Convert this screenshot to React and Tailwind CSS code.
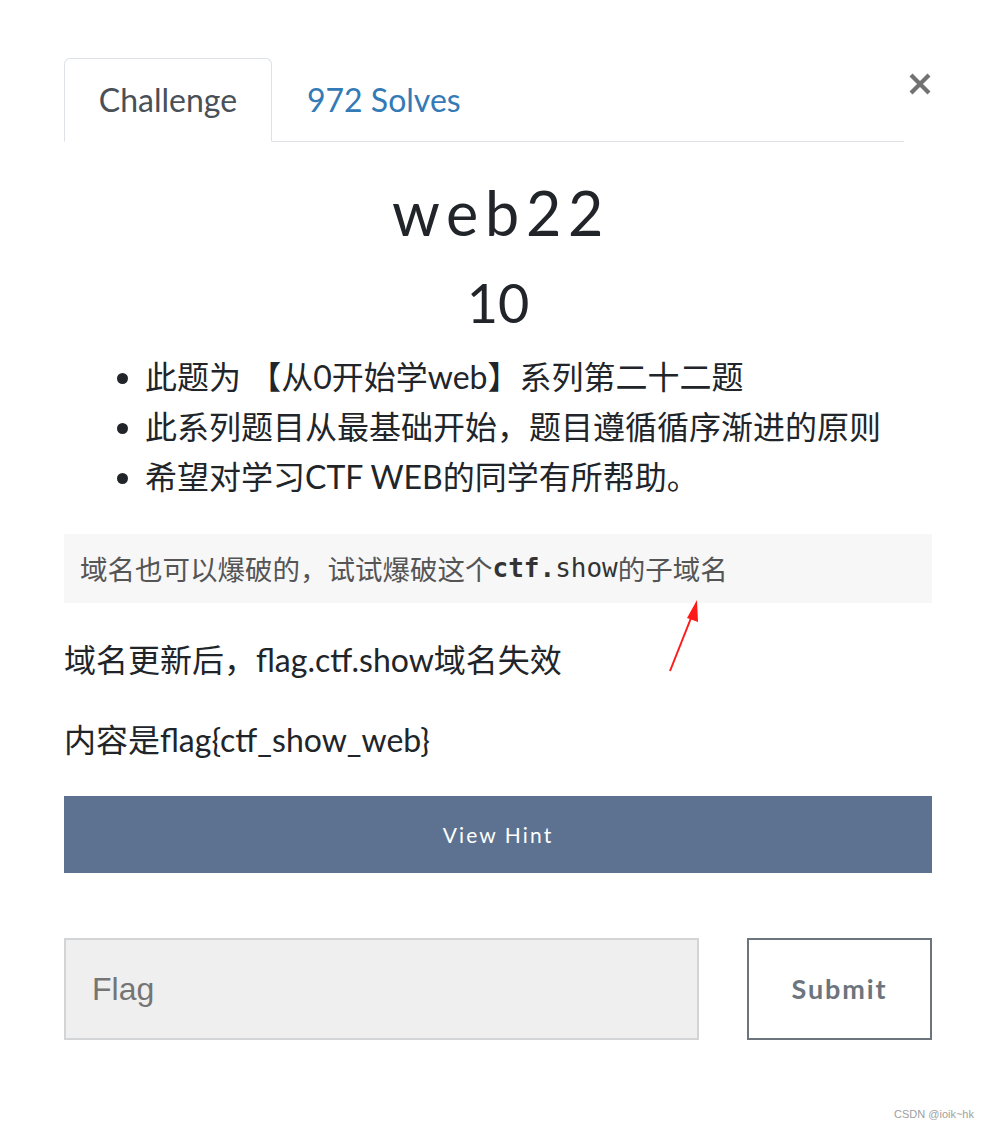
import React from 'react';

const cjk = "font-['Lato','Noto_Sans_CJK_SC',sans-serif]";

const App = () => {
  return (
    <div className={`relative w-[989px] h-[1129px] bg-white text-[#212529] ${cjk}`}>
      <div className="pt-[58px] pl-[64px] pr-[57px]">
        {/* tabs header */}
        <div className="flex items-start">
          <div className="flex flex-1 h-[84px] border-b border-[#dee2e6]">
            <div className="w-[208px] h-[84px] -mb-px flex items-center justify-center border border-[#dee2e6] border-b-white rounded-t-[6px] bg-white text-[32px] text-[#495057]">
              Challenge
            </div>
            <div className="h-[83px] pl-[35px] flex items-center text-[32px] text-[#337ab7]">
              972 Solves
            </div>
          </div>
          <button className="w-[28px] h-[40px] flex items-end justify-end pb-[2px]">
            <svg width="24" height="24" viewBox="0 0 24 24">
              <path d="M3 3 L21 21 M21 3 L3 21" stroke="#727272" strokeWidth="4.2" strokeLinecap="butt" />
            </svg>
          </button>
        </div>

        {/* title */}
        <h1 className="mt-[35px] text-center text-[61px] leading-[72px] tracking-[0.11em] font-normal pl-[6px]">web22</h1>
        <h2 className="mt-[21px] text-center text-[54px] leading-[65px] font-normal">10</h2>

        <ul className="mt-[17px] list-disc pl-[81px] text-[32px] leading-[50px]">
          <li>此题为 【从0开始学web】系列第二十二题</li>
          <li>此系列题目从最基础开始，题目遵循循序渐进的原则</li>
          <li>希望对学习CTF WEB的同学有所帮助。</li>
        </ul>

        <div className="mt-[32px] h-[69px] bg-[#f7f7f7] flex items-center pl-[16px] text-[27.5px] text-[#555] font-['Noto_Sans_CJK_SC',sans-serif]">
          域名也可以爆破的，试试爆破这个
          <span className="font-['DejaVu_Sans_Mono','Liberation_Mono',monospace] text-[#333] text-[26px]">
            <b>ctf.</b>show
          </span>
          的子域名
        </div>

        <p className="mt-[34px] text-[32px] leading-[46px]">域名更新后，flag.ctf.show域名失效</p>
        <p className="mt-[34px] text-[32px] leading-[46px]">内容是flag{'{'}ctf_show_web{'}'}</p>

        <button className="mt-[33px] w-full h-[77px] bg-[#5c7290] text-white text-[21px] tracking-[0.1em] flex items-center justify-center">
          View Hint
        </button>

        <div className="mt-[65px] flex gap-[48px]">
          <input
            type="text"
            placeholder="Flag"
            className="w-[635px] h-[102px] bg-[#efefef] border-2 border-[#d2d4d6] pl-[26px] text-[32px] font-['Liberation_Sans',sans-serif] placeholder:text-[#757575] outline-none"
          />
          <button className="w-[185px] h-[102px] border-2 border-[#6c757d] text-[#6c757d] text-[27px] font-bold tracking-[0.07em] flex items-center justify-center">
            Submit
          </button>
        </div>
      </div>

      {/* red annotation arrow */}
      <svg className="absolute left-[660px] top-[595px]" width="50" height="85" viewBox="0 0 50 85">
        <path d="M10 76 L33 18" stroke="#ff1a1a" strokeWidth="2" />
        <path d="M37 5 L38 27 L27 23 Z" fill="#ff1a1a" />
      </svg>

      <div className="absolute right-[15px] bottom-[7px] text-[11px] text-[#a0a0a0] font-['Liberation_Sans',sans-serif]">
        CSDN @ioik~hk
      </div>
    </div>
  );
};

export default App;
